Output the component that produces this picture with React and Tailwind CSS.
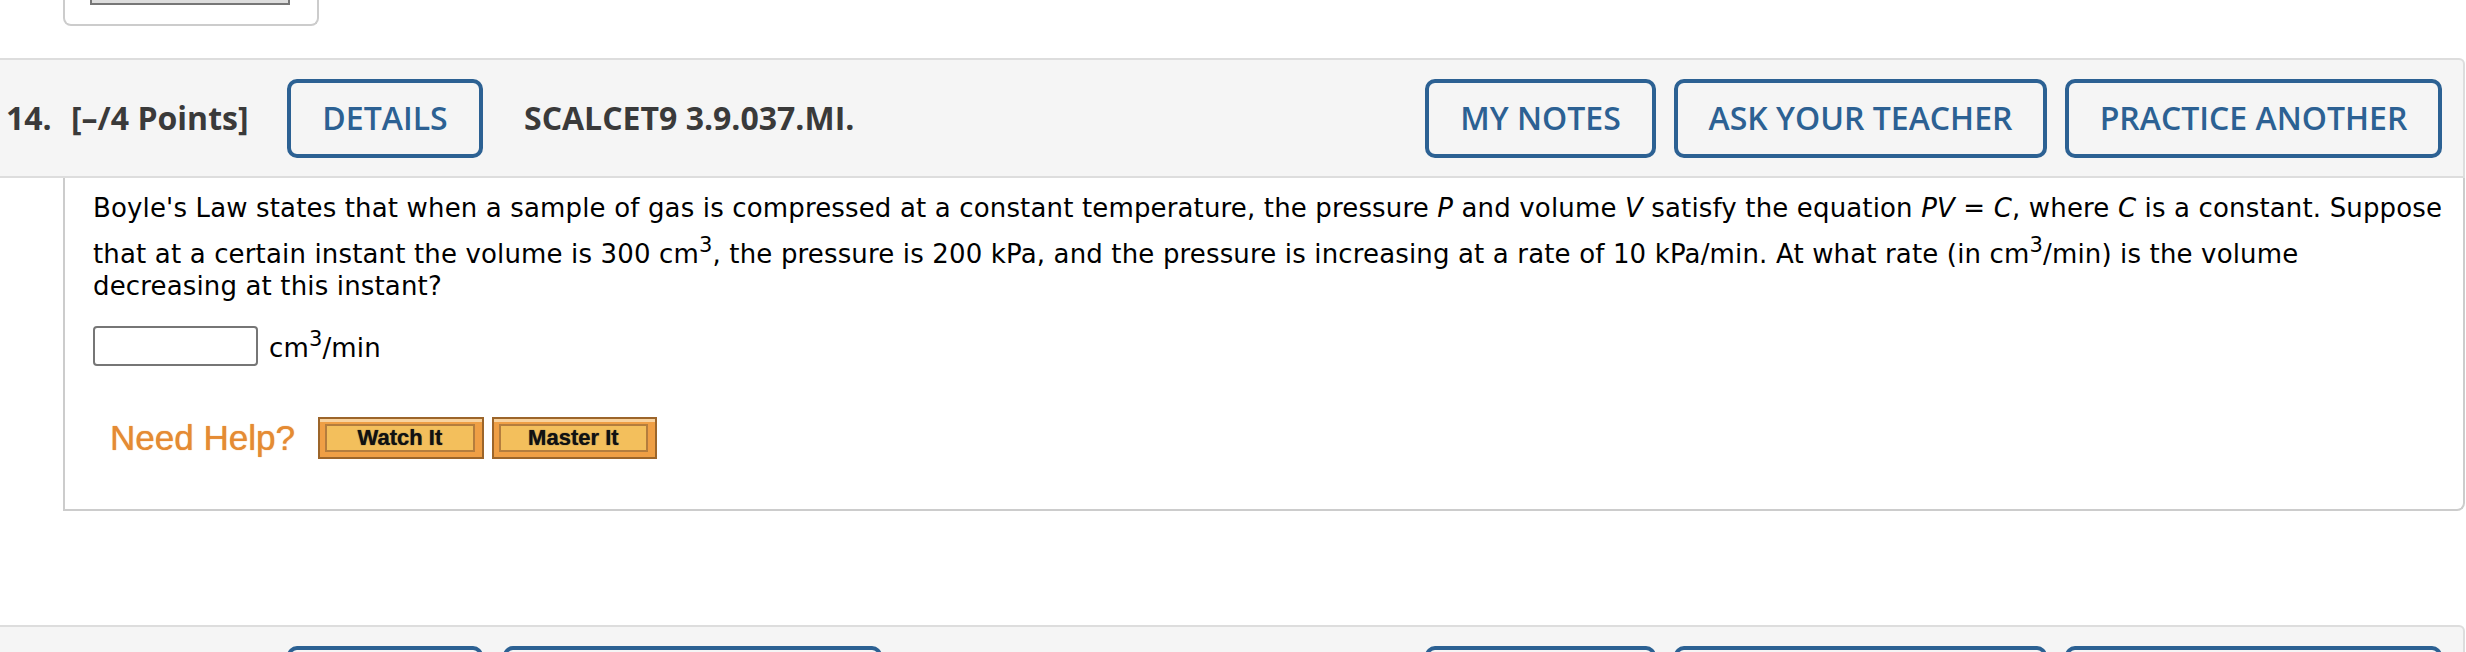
import React from "react";

const blueBtn =
  "h-[79px] shrink-0 flex items-center justify-center border-4 border-[#2c6193] rounded-[10px] text-[#2c6193] text-[32px] font-semibold bg-[#f5f5f5]";

function Sup() {
  return <span className="relative -top-[11px] text-[21px] leading-none">3</span>;
}

function QuestionHeader({ num, code, second, labels = true }) {
  return (
    <div className="h-[120px] w-[2465px] bg-[#f5f5f5] border-y-2 border-r-2 border-[#dddddd] rounded-tr-[6px] flex items-center pl-[6px] pr-[21px] font-['Open_Sans',sans-serif] text-[#3a3a3a]">
      <span className="w-[65px] shrink-0 text-[32px] font-bold leading-[44px]">{num}</span>
      <span className="w-[216px] shrink-0 text-[32px] font-bold leading-[44px]">{labels ? "[–/4 Points]" : ""}</span>
      <button className={blueBtn + " w-[196px]"}>{labels ? "DETAILS" : ""}</button>
      {second ? (
        <button className={blueBtn + " w-[379px] ml-[20px]"}></button>
      ) : (
        <span className="ml-[41px] text-[32px] font-bold leading-[44px]">{code}</span>
      )}
      <div className="ml-auto flex gap-[18px]">
        <button className={blueBtn + " w-[231px]"}>{labels ? "MY NOTES" : ""}</button>
        <button className={blueBtn + " w-[373px]"}>{labels ? "ASK YOUR TEACHER" : ""}</button>
        <button className={blueBtn + " w-[377px]"}>{labels ? "PRACTICE ANOTHER" : ""}</button>
      </div>
    </div>
  );
}

function HelpButton({ label, w }) {
  return (
    <button
      className={
        "h-[42px] shrink-0 border-2 border-[#9c652a] bg-[#ef9f45] pt-[5px] pb-[5px] pl-[5px] pr-[7px] shadow-[inset_0_3px_0_#f8d3a0] " +
        w
      }
    >
      <div className="h-full border-2 border-[#b47d3d] bg-[#f3bf5c] flex items-center justify-center font-['Liberation_Sans',Arial,sans-serif] font-bold text-[22px] text-[#111111] leading-none [text-shadow:0_0_1px_#333]">
        {label}
      </div>
    </button>
  );
}

export default function App() {
  return (
    <div className="w-[2466px] h-[652px] overflow-hidden bg-white">
      {/* previous question remnant */}
      <div className="ml-[63px] w-[256px] h-[26px] border-2 border-t-0 border-[#cccccc] rounded-b-[8px]">
        <div className="ml-[25px] w-[200px] h-[5px] bg-[#dddddd] border-2 border-t-0 border-[#777777]"></div>
      </div>

      <div className="mt-[32px]">
        <QuestionHeader num="14." code="SCALCET9 3.9.037.MI." />

        <div className="ml-[63px] w-[2402px] border-l-2 border-r-2 border-b-2 border-[#cccccc] rounded-br-[8px] pl-[28px] pt-[14px] pb-[50px] font-['DejaVu_Sans',Verdana,sans-serif] text-[26px] tracking-[0.15px] text-black">
          <div className="leading-[32px] whitespace-nowrap">
            Boyle's Law states that when a sample of gas is compressed at a constant temperature, the pressure <i>P</i> and volume <i>V</i> satisfy the equation <i>PV</i> = <i>C</i>, where <i>C</i> is a constant. Suppose
          </div>
          <div className="leading-[32px] whitespace-nowrap mt-[14px]">
            that at a certain instant the volume is 300 cm<Sup />, the pressure is 200 kPa, and the pressure is increasing at a rate of 10 kPa/min. At what rate (in cm<Sup />/min) is the volume
          </div>
          <div className="leading-[32px] whitespace-nowrap">decreasing at this instant?</div>

          <div className="mt-[24px] flex items-center">
            <input
              type="text"
              className="w-[165px] h-[40px] border-2 border-[#767676] rounded-[4px] bg-white"
            />
            <span className="ml-[11px] leading-[32px] translate-y-[2px]">
              cm<Sup />/min
            </span>
          </div>

          <div className="mt-[51px] flex items-center tracking-normal">
            <span className="ml-[17px] font-['Liberation_Sans',Arial,sans-serif] text-[35px] leading-[42px] text-[#e58b33] [text-shadow:0_0_1px_#e58b33]">
              Need Help?
            </span>
            <div className="ml-[23px] flex gap-[8px]">
              <HelpButton label="Watch It" w="w-[166px]" />
              <HelpButton label="Master It" w="w-[165px]" />
            </div>
          </div>
        </div>
      </div>

      <div className="mt-[114px]">
        <QuestionHeader num="" code="" second labels={false} />
      </div>
    </div>
  );
}
